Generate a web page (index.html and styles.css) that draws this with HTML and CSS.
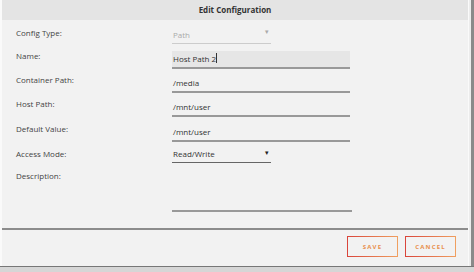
FILE: index.html
```html
<!DOCTYPE html>
<html lang="en">
<head>
<meta charset="UTF-8">
<title>Edit Configuration</title>
<link rel="stylesheet" href="styles.css">
</head>
<body>

<div class="screen">
    <div class="dialog">
        <div class="title">Edit Configuration</div>
        <div class="content">
            <div class="row r-type">
                <label>Config Type:</label>
                <div class="select disabled">Path<span class="arrow">&#9662;</span></div>
            </div>
            <div class="row">
                <label>Name:</label>
                <div class="field focused">Host Path 2<span class="caret"></span></div>
            </div>
            <div class="row">
                <label>Container Path:</label>
                <div class="field">/media</div>
            </div>
            <div class="row r-wide">
                <label>Host Path:</label>
                <div class="field">/mnt/user</div>
            </div>
            <div class="row r-wide">
                <label>Default Value:</label>
                <div class="field">/mnt/user</div>
            </div>
            <div class="row r-mode">
                <label>Access Mode:</label>
                <div class="select">Read/Write<span class="arrow">&#9662;</span></div>
            </div>
            <div class="row">
                <label>Description:</label>
                <div class="field area"></div>
            </div>
        </div>
        <div class="buttons">
            <button class="btn">SAVE</button>
            <button class="btn">CANCEL</button>
        </div>
    </div>
    <div class="scrollbar"></div>
</div>
<div class="below"></div>

</body>
</html>
```

FILE: styles.css
```css
body {
    margin: 0;
    background-color: #d6d6d6;
    font-family: "Open Sans", sans-serif;
    color: #444;
    width: 474px;
    height: 272px;
    overflow: hidden;
}

.screen {
    display: flex;
    height: 266px;
    background-color: #fafafa;
    padding-left: 2px;
    border-bottom: 1px solid #777;
}

.dialog {
    width: 467px;
    background-color: #f2f2f2;
    display: flex;
    flex-direction: column;
}

.scrollbar {
    width: 2px;
    margin-left: 1px;
    background-color: #ececec;
    border-right: 3px solid #8a8a8a;
}

.title {
    height: 20px;
    line-height: 20px;
    background-color: #e4e4e4;
    text-align: center;
    font-size: 8px;
    font-weight: bold;
    color: #333;
}

.content {
    padding: 5px 0 0 14px;
    height: 203px;
    border-bottom: 2px solid #8c8c8c;
}

.row {
    display: flex;
    align-items: flex-start;
    height: 24px;
}

.row.r-type {
    height: 23px;
}

.row.r-wide {
    height: 25px;
}

.row.r-mode {
    height: 22px;
}

label {
    width: 156px;
    font-size: 8px;
    line-height: 16px;
    color: #444;
}

.field {
    width: 177px;
    padding: 3px 0 0 1px;
    line-height: 16px;
    height: 16px;
    font-size: 8px;
    color: #333;
    border-bottom: 2px solid #999;
}

.field.focused {
    background-color: #e6e6e6;
    margin-top: 3px;
    padding-top: 0;
}

.caret {
    display: inline-block;
    width: 1px;
    height: 10px;
    background-color: #333;
    vertical-align: -1px;
}

.field.area {
    padding-top: 0;
    height: 42px;
    width: 179px;
}

.select {
    width: 98px;
    height: 16px;
    line-height: 16px;
    font-size: 8px;
    color: #333;
    padding-left: 1px;
    border-bottom: 1px solid #666;
    position: relative;
}

.select.disabled {
    color: #aaa;
    border-bottom-color: #ccc;
    padding-top: 2px;
}

.arrow {
    position: absolute;
    right: 2px;
    bottom: 1px;
    font-size: 7px;
    color: #222;
}

.disabled .arrow {
    color: #aaa;
    bottom: 3px;
}

.buttons {
    display: flex;
    justify-content: flex-end;
    gap: 7px;
    padding: 6px 12px 0 0;
}

.btn {
    width: 51px;
    height: 21px;
    background: transparent;
    border: 1px solid;
    border-image: linear-gradient(90deg, #d9443a, #f0a060) 1;
    font-family: "Open Sans", sans-serif;
    font-size: 6px;
    font-weight: bold;
    letter-spacing: 1.2px;
    color: #e8904e;
    padding: 0;
}

.below {
    height: 5px;
    background-color: #d6d6d6;
}
```
